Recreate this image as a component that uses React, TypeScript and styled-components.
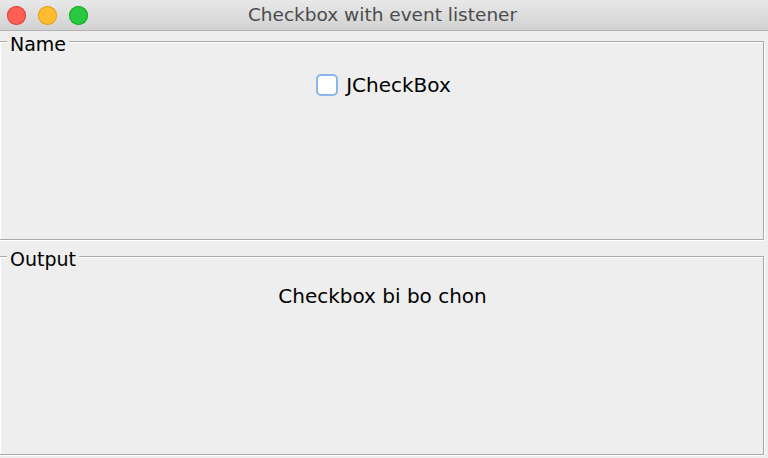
import React from 'react';
import styled, { createGlobalStyle } from 'styled-components';

const GlobalStyle = createGlobalStyle`
  html, body {
    margin: 0;
    padding: 0;
    background: #eeeeee;
    overflow: hidden;
  }
  body {
    font-family: 'DejaVu Sans', 'Liberation Sans', sans-serif;
    color: #000;
  }
`;

type LightProps = {
  color: string;
  edge: string;
};

const Window = styled.div`
  width: 768px;
  height: 458px;
  display: flex;
  flex-direction: column;
  background: #eeeeee;
  overflow: hidden;
`;

const TitleBar = styled.div`
  height: 30px;
  flex: none;
  display: grid;
  grid-template-columns: 1fr auto 1fr;
  align-items: center;
  background: linear-gradient(#e8e8e8, #d2d2d2);
  border-bottom: 1px solid #b3b3b3;
`;

const Lights = styled.div`
  display: flex;
  gap: 12px;
  padding-left: 7px;
`;

const Light = styled.span<LightProps>`
  width: 19px;
  height: 19px;
  border-radius: 50%;
  background: ${(p) => p.color};
  box-shadow: inset 0 0 0 1px ${(p) => p.edge};
`;

const Title = styled.div`
  font-size: 18.5px;
  color: #4b4b4b;
  line-height: 30px;
  margin-left: -3px;
`;

const Body = styled.div`
  display: flex;
  flex-direction: column;
  gap: 16px;
  padding-top: 10px;
  margin-left: -1px;
`;

// etched titled border: grey line with a white highlight
const Panel = styled.div`
  width: 765px;
  height: 199px;
  box-sizing: border-box;
  border: 1px solid #a9a9a9;
  box-shadow: 1px 1px 0 #ffffff, inset 1px 1px 0 #ffffff;
  display: flex;
  flex-direction: column;
  align-items: center;
`;

const Caption = styled.div`
  align-self: flex-start;
  margin: -8px 0 0 7px;
  padding: 0 3px;
  background: #eeeeee;
  font-size: 19px;
  line-height: 20px;
`;

const CheckRow = styled.label`
  display: flex;
  align-items: center;
  gap: 8px;
  margin: 20px 0 0 4px;
  font-size: 20px;
  line-height: 22px;
`;

const Box = styled.span`
  width: 22px;
  height: 22px;
  box-sizing: border-box;
  border: 2px solid #8ab6ee;
  border-radius: 5px;
  background: #ffffff;
`;

const Message = styled.div`
  margin: 15px 0 0 2px;
  font-size: 20px;
  line-height: 24px;
`;

export default function App() {
  return (
    <Window>
      <GlobalStyle />
      <TitleBar>
        <Lights>
          <Light color="#fe5f57" edge="#e0443e" />
          <Light color="#febc2e" edge="#dea123" />
          <Light color="#28c840" edge="#1aab29" />
        </Lights>
        <Title>Checkbox with event listener</Title>
        <span />
      </TitleBar>
      <Body>
        <Panel>
          <Caption>Name</Caption>
          <CheckRow>
            <Box />
            JCheckBox
          </CheckRow>
        </Panel>
        <Panel>
          <Caption>Output</Caption>
          <Message>Checkbox bi bo chon</Message>
        </Panel>
      </Body>
    </Window>
  );
}
